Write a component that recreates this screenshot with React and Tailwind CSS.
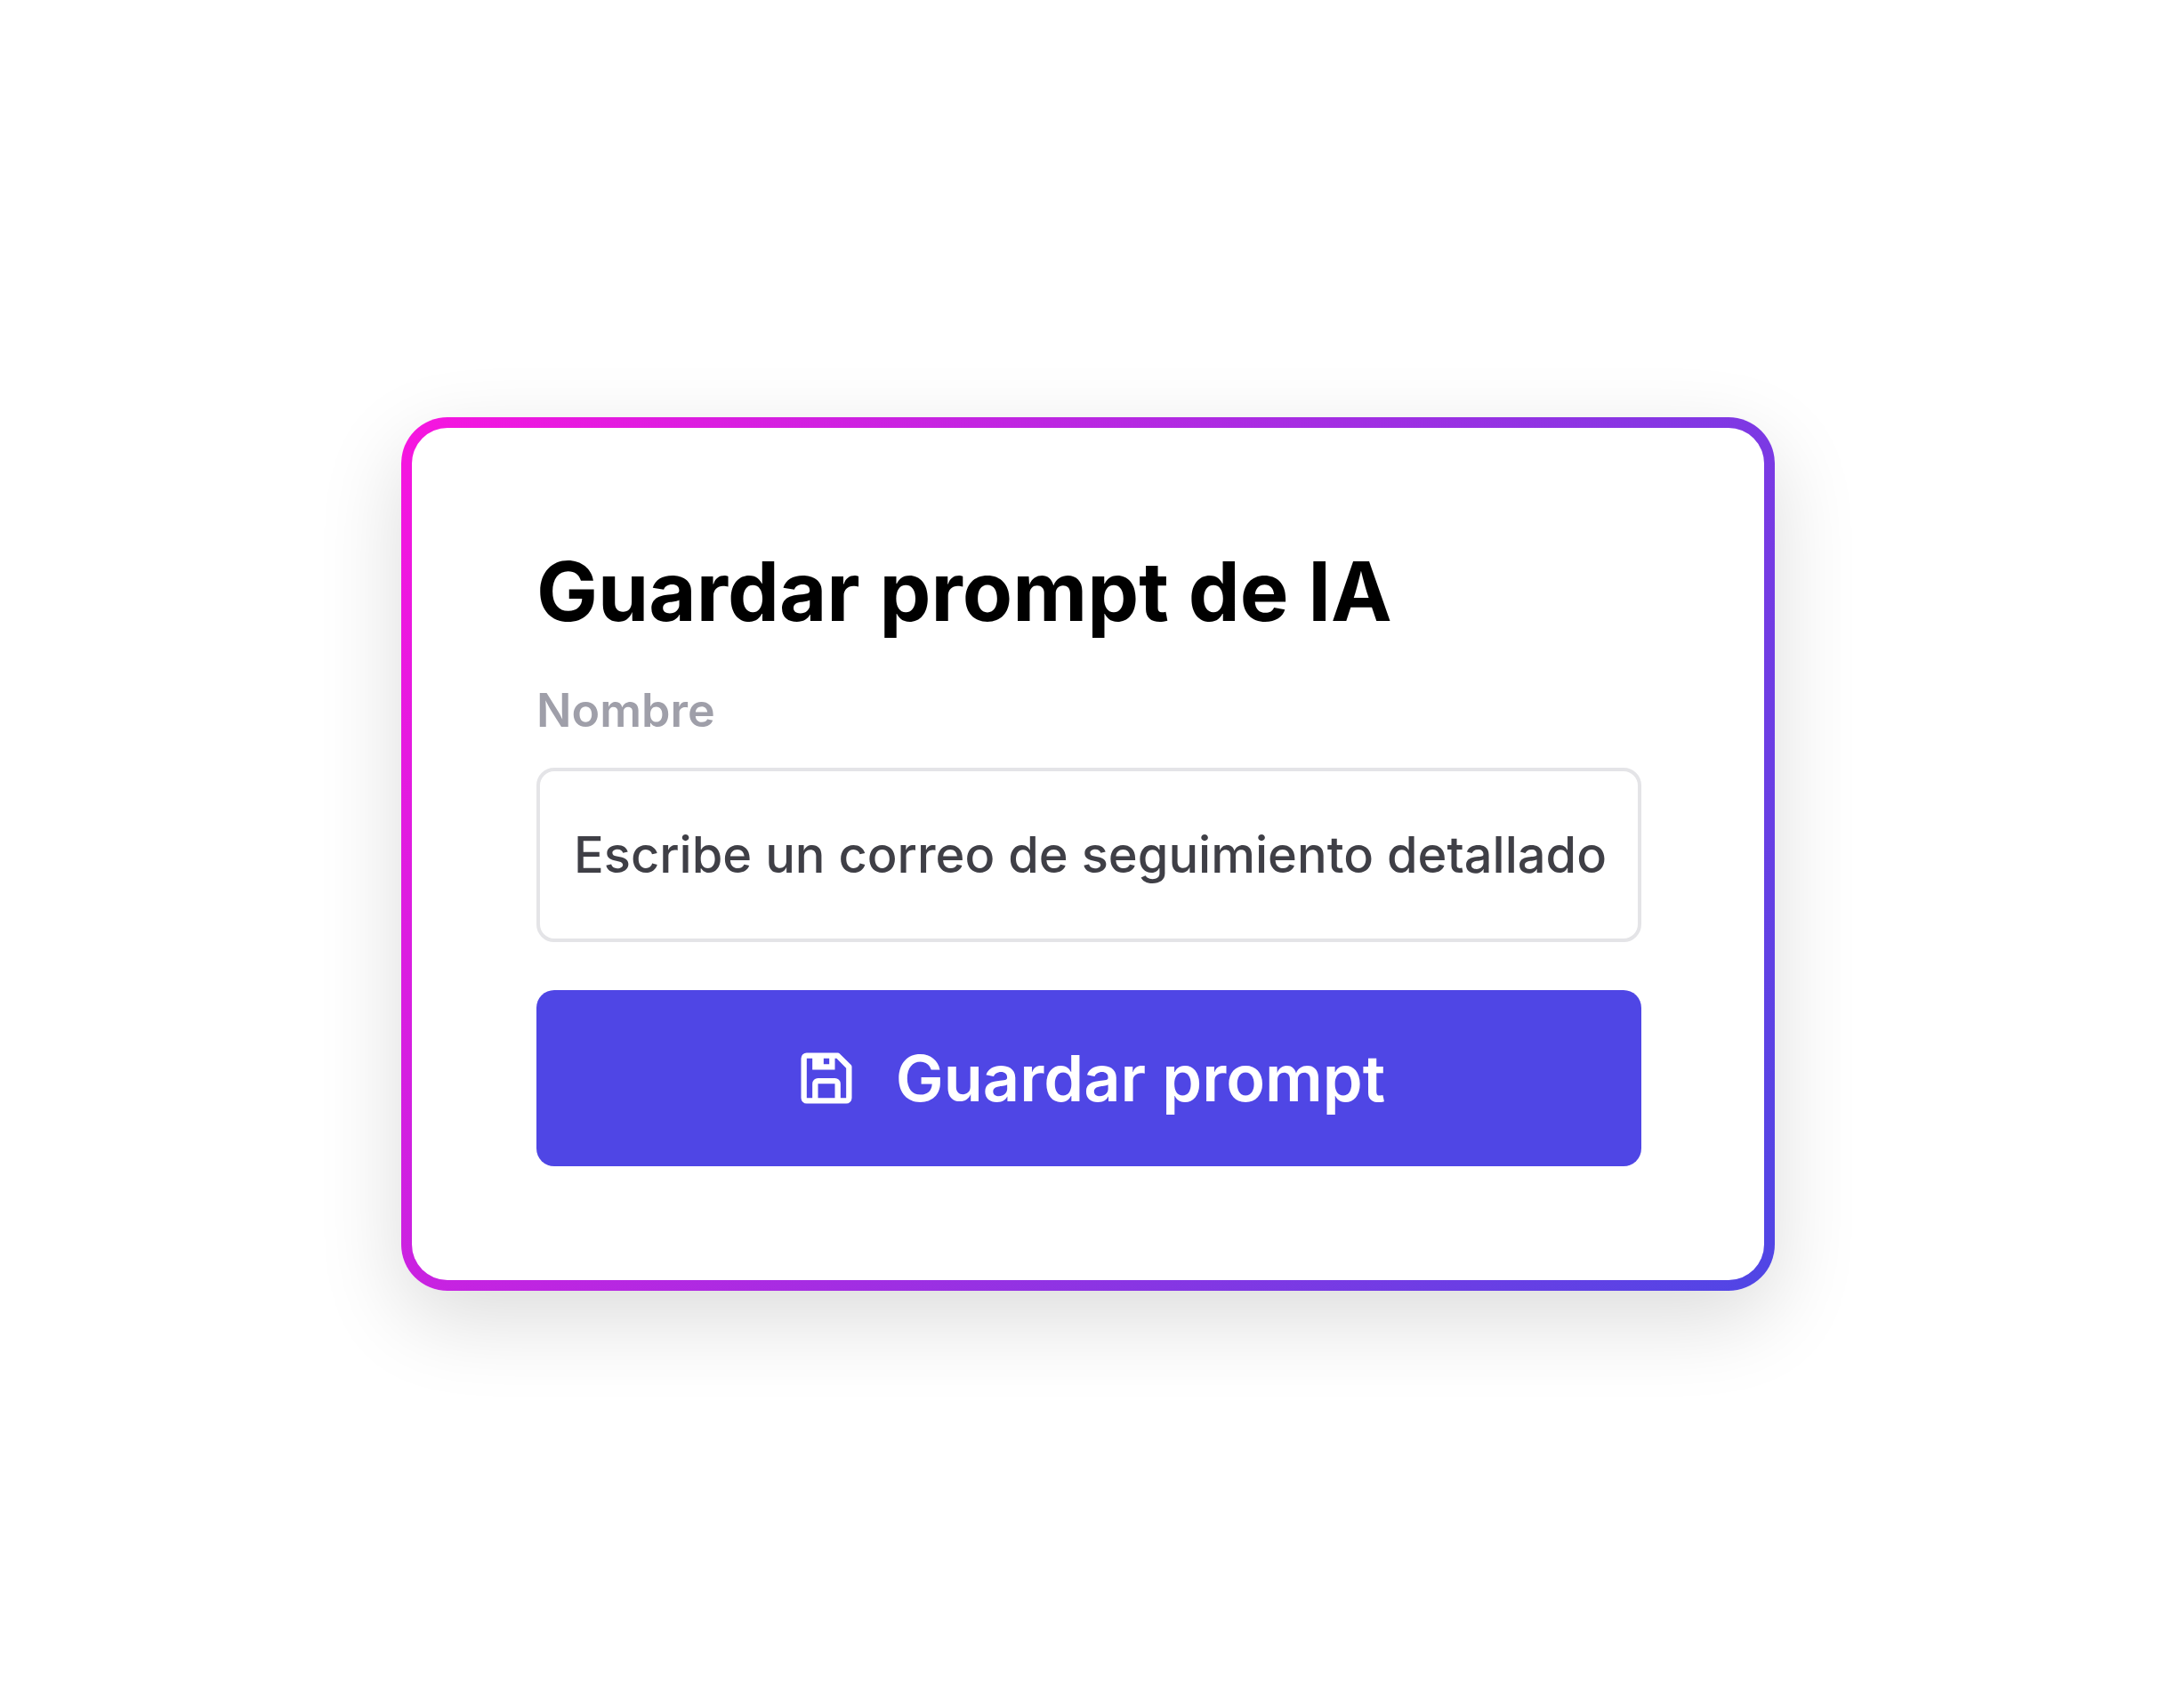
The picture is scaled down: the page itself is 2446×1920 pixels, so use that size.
import { useState } from 'react';
import { BiSave } from 'react-icons/bi';

export default function App() {
  const [name, setName] = useState('Escribe un correo de seguimiento detallado');

  return (
    <main className="flex min-h-screen items-center justify-center bg-white p-10 font-['Inter',sans-serif]">
      {/* Gradient frame */}
      <div className="w-full max-w-[1544px] rounded-[52px] bg-[linear-gradient(120deg,#f715df,#4f46e5)] p-3 shadow-[0_32px_96px_rgba(0,0,0,0.14)]">
        <form
          className="flex flex-col rounded-[40px] bg-white pt-[126px] pr-[138px] pb-32 pl-[140px]"
          onSubmit={(e) => e.preventDefault()}
        >
          <h1 className="text-[92px] leading-[116px] font-bold text-black">Guardar prompt de IA</h1>

          <label htmlFor="name" className="mt-10 text-[52px] leading-[72px] font-semibold text-zinc-400">
            Nombre
          </label>
          <input
            id="name"
            type="text"
            value={name}
            onChange={(e) => setName(e.target.value)}
            className="mt-7 h-[196px] w-full rounded-[20px] border-4 border-[#e4e4e7] bg-white pr-4 pl-[38px] text-[56px] font-medium text-[#3f3f46] outline-none"
          />

          <button
            type="submit"
            className="mt-[54px] flex h-[198px] items-center justify-center gap-10 rounded-[20px] bg-[#4f46e5] text-[72px] font-semibold text-white"
          >
            <BiSave className="size-[76px]" aria-hidden="true" />
            Guardar prompt
          </button>
        </form>
      </div>
    </main>
  );
}
